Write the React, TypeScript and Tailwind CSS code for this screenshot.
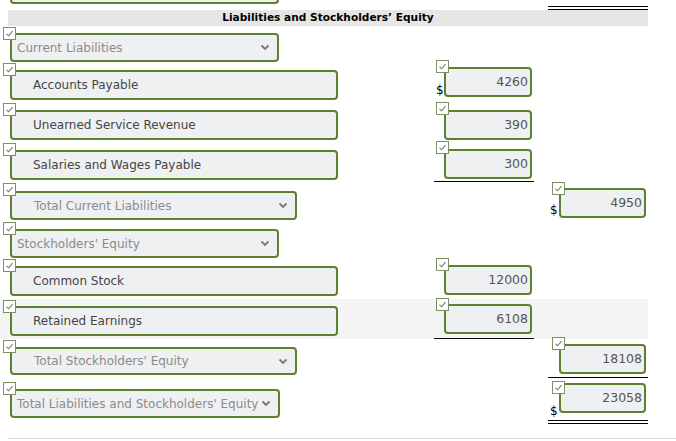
import React from 'react';

const GREEN = 'border-[#5e8131]';

const Check = ({ pos }: { pos: string }) => (
  <span className={`absolute ${pos} z-10 flex h-[13px] w-[13px] items-center justify-center border border-[#7d9163] bg-white`}>
    <svg width="9" height="9" viewBox="0 0 9 9">
      <polyline points="1.5,4.8 3.6,6.8 7.5,2.2" fill="none" stroke="#6f7f62" strokeWidth="1.1" />
    </svg>
  </span>
);

const Chevron = () => (
  <svg width="10" height="7" viewBox="0 0 10 7" className="shrink-0">
    <polyline points="1.5,1.5 5,5 8.5,1.5" fill="none" stroke="#777" strokeWidth="1.8" />
  </svg>
);

type SelProps = { text: string; box: string; pad: string; cb: string };
const SelectCell = ({ text, box, pad, cb }: SelProps) => (
  <div className="relative">
    <Check pos={cb} />
    <div className={`ml-[10px] flex items-center justify-between rounded-[4px] border-2 ${GREEN} bg-[#eff0f2] pr-[7px] ${pad} ${box}`}>
      <span className="whitespace-nowrap text-[12px] text-[#8b8b8b]">{text}</span>
      <Chevron />
    </div>
  </div>
);

const InputCell = ({ text, box, cb }: { text: string; box: string; cb: string }) => (
  <div className="relative">
    <Check pos={cb} />
    <div className={`ml-[10px] flex h-[30px] w-[328px] items-center rounded-[4px] border-2 ${GREEN} bg-[#eff0f2] pl-[21px] ${box}`}>
      <span className="whitespace-nowrap text-[12px] text-[#454545]">{text}</span>
    </div>
  </div>
);

type NumProps = { value: string; box: string; cb: string; dollar?: boolean; line?: string; width: string; ml: string };
const NumCell = ({ value, box, cb, dollar, line = '', width, ml }: NumProps) => (
  <div className={`relative ${line}`}>
    <Check pos={cb} />
    {dollar && <span className="absolute bottom-[calc(100%-34px)] left-[2px] text-[12px] leading-none text-black">$</span>}
    <div className={`${ml} flex h-[30px] ${width} items-center justify-end rounded-[4px] border-2 ${GREEN} bg-[#eff0f2] pr-[2px] ${box}`}>
      <span className="text-[12.5px] text-[#555]">{value}</span>
    </div>
  </div>
);

const Empty = ({ line = '' }: { line?: string }) => <div className={line} />;

export default function App() {
  const grid = 'grid grid-cols-[434px_100px_14px_100px]';
  return (
    <div className="h-[441px] w-[676px] overflow-hidden bg-white font-['DejaVu_Sans',sans-serif]">
      {/* tail of the previous block */}
      <div className={`${grid} h-[10px]`}>
        <div className="pl-[10px]">
          <div className={`h-[4px] w-[269px] rounded-b-[4px] border-x-2 border-b-2 ${GREEN} bg-[#eff0f2]`} />
        </div>
        <Empty />
        <Empty />
        <div className="pt-[6px]">
          <div className="h-[4px] border-y border-black" />
        </div>
      </div>

      <div className="ml-[8px] flex h-[16px] w-[640px] items-center justify-center bg-[#e6e6e6]">
        <span className="text-[10.6px] font-bold text-black">Liabilities and Stockholders’ Equity</span>
      </div>

      {/* Current Liabilities */}
      <div className={`${grid} h-[36px]`}>
        <SelectCell text="Current Liabilities" cb="left-[3px] top-[1px]" box="mt-[7px] h-[29px] w-[269px]" pad="pl-[5px]" />
      </div>

      <div className={`${grid} h-[40px]`}>
        <InputCell text="Accounts Payable" cb="left-[3px] top-[1px]" box="mt-[8px]" />
        <NumCell value="4260" cb="left-[2px] top-[-2px]" box="mt-[5px]" dollar width="w-[88px]" ml="ml-[10px]" />
      </div>

      <div className={`${grid} h-[40px]`}>
        <InputCell text="Unearned Service Revenue" cb="left-[3px] top-[1px]" box="mt-[8px]" />
        <NumCell value="390" cb="left-[2px] top-[0px]" box="mt-[8px]" width="w-[88px]" ml="ml-[10px]" />
      </div>

      <div className={`${grid} h-[40px]`}>
        <InputCell text="Salaries and Wages Payable" cb="left-[3px] top-[1px]" box="mt-[8px]" />
        <NumCell value="300" cb="left-[2px] top-[-1px]" box="mt-[7px]" width="w-[88px]" ml="ml-[10px]" line="border-b border-black" />
      </div>

      {/* Total Current Liabilities */}
      <div className={`${grid} h-[39px]`}>
        <SelectCell text="Total Current Liabilities" cb="left-[3px] top-[1px]" box="mt-[9px] h-[29px] w-[287px]" pad="pl-[22px]" />
        <Empty />
        <Empty />
        <NumCell value="4950" cb="left-[4px] top-[0px]" box="mt-[6px]" dollar width="w-[87px]" ml="ml-[11px]" />
      </div>

      {/* Stockholders' Equity */}
      <div className={`${grid} h-[37px]`}>
        <SelectCell text="Stockholders' Equity" cb="left-[3px] top-[1px]" box="mt-[8px] h-[29px] w-[269px]" pad="pl-[5px]" />
      </div>

      <div className={`${grid} h-[41px]`}>
        <InputCell text="Common Stock" cb="left-[3px] top-[1px]" box="mt-[8px]" />
        <NumCell value="12000" cb="left-[2px] top-[0px]" box="mt-[7px]" width="w-[88px]" ml="ml-[10px]" />
      </div>

      <div className={`${grid} h-[40px] w-[648px] bg-[#f4f4f4]`}>
        <InputCell text="Retained Earnings" cb="left-[3px] top-[1px]" box="mt-[7px]" />
        <NumCell value="6108" cb="left-[2px] top-[-1px]" box="mt-[5px]" width="w-[88px]" ml="ml-[10px]" line="border-b border-black" />
      </div>

      {/* Total Stockholders' Equity */}
      <div className={`${grid} h-[39px]`}>
        <SelectCell text="Total Stockholders' Equity" cb="left-[3px] top-[1px]" box="mt-[8px] h-[28px] w-[287px]" pad="pl-[22px]" />
        <Empty />
        <Empty />
        <NumCell value="18108" cb="left-[4px] top-[-2px]" box="mt-[5px]" width="w-[87px]" ml="ml-[11px]" line="border-b border-black" />
      </div>

      {/* Total Liabilities and Stockholders' Equity */}
      <div className={`${grid} h-[60px]`}>
        <SelectCell text="Total Liabilities and Stockholders' Equity" cb="left-[3px] top-[4px]" box="mt-[11px] h-[29px] w-[270px]" pad="pl-[5px] pr-[3px]" />
        <Empty />
        <Empty />
        <div>
          <NumCell value="23058" cb="left-[4px] top-[-2px]" box="mt-[5px]" dollar width="w-[87px]" ml="ml-[11px]" />
          <div className="mt-[7px] h-[4px] border-y border-black" />
        </div>
      </div>
      <div className="ml-[8px] border-t border-[#d8d8d8]" />
    </div>
  );
}
